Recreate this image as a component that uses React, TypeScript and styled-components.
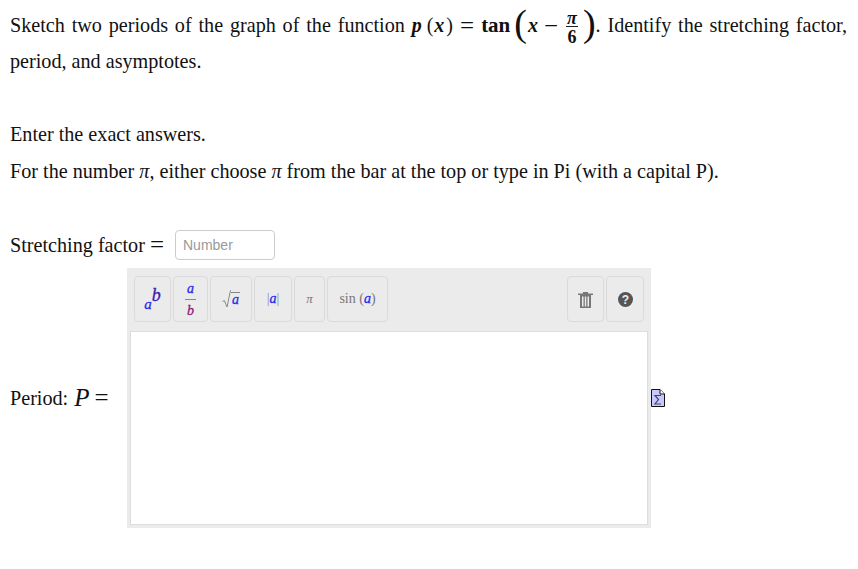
import React from 'react';
import styled, { createGlobalStyle } from 'styled-components';

const Global = createGlobalStyle`
  html, body {
    margin: 0;
    padding: 0;
    background: #fff;
  }
  body {
    font-family: "Liberation Serif", "Times New Roman", serif;
    font-size: 20.16px;
    color: #111;
  }
`;

const Page = styled.div`
  display: flex;
  flex-direction: column;
  width: 858px;
  height: 569px;
  box-sizing: border-box;
  padding: 0 11px 0 10px;
  overflow: hidden;
`;

const QuestionLine = styled.div`
  height: 35px;
  margin-top: 8px;
  line-height: 35px;
  white-space: nowrap;
  text-align: justify;
  text-align-last: justify;
`;

const Line = styled.p<{ $top: number; $height?: number }>`
  margin: ${({ $top }) => $top}px 0 0;
  line-height: ${({ $height }) => $height || 22}px;
`;

const MathText = styled.span`
  display: inline-flex;
  align-items: center;
  vertical-align: top;
  text-align-last: left;
  font-family: "Liberation Serif", serif;
  font-size: 20px;
  height: 35px;
  line-height: 35px;
  white-space: pre;
`;

const Italic = styled.i<{ $l?: number; $r?: number }>`
  font-family: "Liberation Serif", serif;
  font-style: italic;
  font-weight: bold;
  font-size: 20px;
  margin: 0 ${({ $r }) => $r || 0}px 0 ${({ $l }) => $l || 0}px;
`;

const MathSign = styled.span<{ $l?: number; $r?: number; $size?: number }>`
  font-size: ${({ $size }) => $size || 20}px;
  margin: 0 ${({ $r }) => $r || 0}px 0 ${({ $l }) => $l || 0}px;
`;

const FuncWord = styled.b`
  font-size: 21px;
`;

const Big = styled.span<{ $l?: number; $r?: number }>`
  font-family: "Liberation Serif", serif;
  font-size: 38px;
  line-height: 35px;
  margin: -5px ${({ $r }) => $r || 0}px 0 ${({ $l }) => $l || 0}px;
`;

const Fraction = styled.span`
  display: inline-flex;
  flex-direction: column;
  align-items: center;
  font-size: 18px;
  line-height: 14px;
  margin: 5px 5px 0 8px;
  & > :first-child {
    border-bottom: 1px solid #222;
    line-height: 13px;
    padding: 0 1px 1px;
    font-weight: bold;
  }
  & > :last-child {
    font-weight: bold;
    margin-top: 3px;
  }
`;

const InlineVar = styled.i`
  font-family: "Liberation Serif", serif;
  font-style: italic;
`;

const NumberRow = styled.div`
  display: flex;
  align-items: center;
  margin-top: 48px;
  height: 30px;
`;

const Equals = styled.span`
  font-size: 25px;
  line-height: 20px;
  margin-left: 5px;
`;

const NumberInput = styled.input`
  width: 100px;
  height: 30px;
  box-sizing: border-box;
  border: 1px solid #ccc;
  border-radius: 4px;
  padding: 0 7px;
  margin-left: 11px;
  font-family: "Liberation Sans", Arial, sans-serif;
  font-size: 14px;
  outline: none;
  &::placeholder {
    color: #999;
    opacity: 1;
  }
`;

const PeriodRow = styled.div`
  display: flex;
  align-items: center;
  margin-top: 8px;
`;

const PeriodLabel = styled.div`
  display: flex;
  align-items: center;
  width: 117px;
  flex: none;
  white-space: pre;
`;

const BigVar = styled.i`
  font-size: 25px;
  margin-left: 6px;
`;

const Editor = styled.div`
  width: 524px;
  height: 260px;
  flex: none;
  box-sizing: border-box;
  display: flex;
  flex-direction: column;
  background: #ebebeb;
  padding: 8px 3px 3px;
`;

const Toolbar = styled.div`
  display: flex;
  gap: 2px;
  height: 46px;
  padding: 0 4px;
  margin-bottom: 9px;
`;

const ToolButton = styled.div<{ $w: number }>`
  width: ${({ $w }) => $w}px;
  box-sizing: border-box;
  border: 1px solid #dadada;
  border-radius: 4px;
  display: flex;
  align-items: center;
  justify-content: center;
  font-size: 13px;
  color: #777;
  white-space: pre;
`;

const Spacer = styled.div`
  flex: 1;
`;

const EditArea = styled.div`
  flex: 1;
  background: #fff;
  border: 1px solid #ddd;
`;

const A = styled.i<{ $size?: number }>`
  color: #2a2aee;
  font-style: italic;
  font-weight: 400;
  -webkit-text-stroke: 0.3px #2a2aee;
  font-size: ${({ $size }) => $size || 14}px;
`;

const B = styled.i<{ $size?: number }>`
  color: #8a1a7a;
  font-style: italic;
  font-weight: 400;
  -webkit-text-stroke: 0.3px #8a1a7a;
  font-size: ${({ $size }) => $size || 14}px;
`;

const Power = styled.span`
  display: flex;
  align-items: flex-start;
  line-height: 18px;
  & > :first-child {
    margin-top: 9px;
  }
  & > :last-child {
    color: #3a1ab0;
    -webkit-text-stroke-color: #3a1ab0;
  }
`;

const StackedFrac = styled.span`
  display: flex;
  flex-direction: column;
  align-items: center;
  line-height: 15px;
  & > :first-child {
    border-bottom: 1px solid #888;
    padding: 0 2px 3px;
  }
  & > :last-child {
    padding-top: 3px;
  }
`;

const Abs = styled.span`
  color: #7f8fb0;
  font-size: 14px;
`;

const Pi = styled.i`
  color: #777;
  font-size: 13px;
`;

const FuncName = styled.span`
  color: #777;
  font-size: 14px;
`;

const Radicand = styled.span`
  border-top: 1px solid #888;
  line-height: 13px;
  padding: 0 1px;
  margin-top: -1px;
`;

const RootIcon = () => (
  <svg width="9" height="18" viewBox="0 0 9 18">
    <path d="M0.500 11.500 L2.300 10.500 L5 17 L8.500 0.500 L9 0.500" fill="none" stroke="#888" strokeWidth="1" />
  </svg>
);

const TrashIcon = () => (
  <svg width="15" height="17" viewBox="0 0 15 17">
    <path d="M0 2.500H15V4H0Z M5 1H10V2.500H5Z" fill="#777" />
    <path d="M2 4H13V17H2Z" fill="#777" />
    <path d="M4 5.500H5.500V15.500H4Z M6.800 5.500H8.200V15.500H6.800Z M9.500 5.500H11V15.500H9.500Z" fill="#ebebeb" />
  </svg>
);

const HelpIcon = () => (
  <svg width="15" height="15" viewBox="0 0 15 15">
    <circle cx="7.500" cy="7.500" r="7.500" fill="#555" />
    <text x="7.500" y="11.800" textAnchor="middle" fontSize="12" fontWeight="bold" fontFamily="Liberation Sans" fill="#eee">?</text>
  </svg>
);

const SumFileIcon = () => (
  <svg width="14" height="18" viewBox="0 0 14 18" style={{ flex: 'none' }}>
    <path d="M0.500 0.500H9L13.500 5V17.500H0.500Z" fill="#c8c8ff" stroke="#111" />
    <path d="M9 0.500V5H13.500" fill="#fff" stroke="#111" />
    <path d="M10 6.500H4L7.500 10.500L4 15H10" fill="none" stroke="#446" strokeWidth="1.200" />
  </svg>
);

const App: React.FC = () => {
  return (
    <Page>
      <Global />
      <QuestionLine>
        Sketch two periods of the graph of the function{' '}
        <MathText>
          <Italic>p</Italic>
          <MathSign $l={5}>(</MathSign>
          <Italic $l={1}>x</Italic>
          <MathSign $l={2}>)</MathSign>
          <MathSign $size={25} $l={7} $r={7}>=</MathSign>
          <FuncWord>tan</FuncWord>
          <Big $l={4}>(</Big>
          <Italic $l={1}>x</Italic>
          <MathSign $size={25} $l={6}>−</MathSign>
          <Fraction><InlineVar>π</InlineVar><span>6</span></Fraction>
          <Big>)</Big>
        </MathText>
        . Identify the stretching factor,
      </QuestionLine>
      <Line $top={1} $height={35}>period, and asymptotes.</Line>
      <Line $top={44}>Enter the exact answers.</Line>
      <Line $top={15}>For the number <InlineVar>π</InlineVar>, either choose <InlineVar>π</InlineVar> from the bar at the top or type in Pi (with a capital P).</Line>
      <NumberRow>
        <span>Stretching factor</span>
        <Equals>=</Equals>
        <NumberInput placeholder="Number" />
      </NumberRow>
      <PeriodRow>
        <PeriodLabel>Period:<BigVar>P</BigVar><Equals>=</Equals></PeriodLabel>
        <Editor>
          <Toolbar>
            <ToolButton $w={37}><Power><A $size={15}>a</A><B $size={18}>b</B></Power></ToolButton>
            <ToolButton $w={35}><StackedFrac><A>a</A><B>b</B></StackedFrac></ToolButton>
            <ToolButton $w={42}><RootIcon /><Radicand><A>a</A></Radicand></ToolButton>
            <ToolButton $w={38}><Abs>|<A>a</A>|</Abs></ToolButton>
            <ToolButton $w={31}><Pi>π</Pi></ToolButton>
            <ToolButton $w={61}><FuncName>sin (<A>a</A>)</FuncName></ToolButton>
            <Spacer />
            <ToolButton $w={37}><TrashIcon /></ToolButton>
            <ToolButton $w={38}><HelpIcon /></ToolButton>
          </Toolbar>
          <EditArea />
        </Editor>
        <SumFileIcon />
      </PeriodRow>
    </Page>
  );
};

export default App;
